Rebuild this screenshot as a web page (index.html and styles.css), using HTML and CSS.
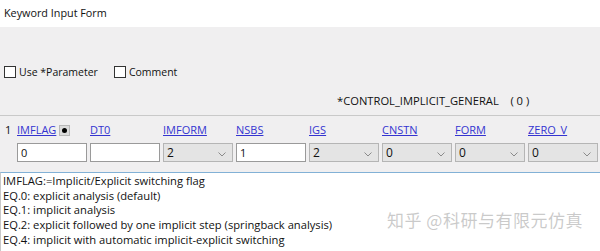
FILE: index.html
```html
<!DOCTYPE html>
<html>
<head>
<meta charset="utf-8">
<link rel="stylesheet" href="styles.css">
</head>
<body>
<div class="win">
  <div class="title">Keyword Input Form</div>
  <div class="panel">
    <div class="options">
      <label class="opt"><span class="box"></span>Use *Parameter</label>
      <label class="opt"><span class="box"></span>Comment</label>
    </div>
    <div class="kw">*CONTROL_IMPLICIT_GENERAL&nbsp;&nbsp;&nbsp;&nbsp;(&nbsp;0&nbsp;)</div>
    <div class="sep"></div>
    <div class="card">
      <div class="num">1</div>
      <div class="fields">
        <div class="field">
          <div class="lab"><a>IMFLAG</a><span class="radio"><span class="dot"></span></span></div>
          <div class="inp">0</div>
        </div>
        <div class="field">
          <div class="lab"><a>DT0</a></div>
          <div class="inp"></div>
        </div>
        <div class="field">
          <div class="lab"><a>IMFORM</a></div>
          <div class="sel">2<svg class="chev" width="8" height="5" viewBox="0 0 8 5"><path d="M0.5 0.5 L4 4 L7.5 0.5" fill="none" stroke="#8a8a8a" stroke-width="1"/></svg></div>
        </div>
        <div class="field">
          <div class="lab"><a>NSBS</a></div>
          <div class="inp">1</div>
        </div>
        <div class="field">
          <div class="lab"><a>IGS</a></div>
          <div class="sel">2<svg class="chev" width="8" height="5" viewBox="0 0 8 5"><path d="M0.5 0.5 L4 4 L7.5 0.5" fill="none" stroke="#8a8a8a" stroke-width="1"/></svg></div>
        </div>
        <div class="field">
          <div class="lab"><a>CNSTN</a></div>
          <div class="sel">0<svg class="chev" width="8" height="5" viewBox="0 0 8 5"><path d="M0.5 0.5 L4 4 L7.5 0.5" fill="none" stroke="#8a8a8a" stroke-width="1"/></svg></div>
        </div>
        <div class="field">
          <div class="lab"><a>FORM</a></div>
          <div class="sel">0<svg class="chev" width="8" height="5" viewBox="0 0 8 5"><path d="M0.5 0.5 L4 4 L7.5 0.5" fill="none" stroke="#8a8a8a" stroke-width="1"/></svg></div>
        </div>
        <div class="field">
          <div class="lab"><a>ZERO_V</a></div>
          <div class="sel">0<svg class="chev" width="8" height="5" viewBox="0 0 8 5"><path d="M0.5 0.5 L4 4 L7.5 0.5" fill="none" stroke="#8a8a8a" stroke-width="1"/></svg></div>
        </div>
      </div>
    </div>
  </div>
  <div class="desc">
    <div>IMFLAG:=Implicit/Explicit switching flag</div>
    <div>EQ.0: explicit analysis (default)</div>
    <div>EQ.1: implicit analysis</div>
    <div>EQ.2: explicit followed by one implicit step (springback analysis)</div>
    <div>EQ.4: implicit with automatic implicit-explicit switching</div>
    <div>EQ.5: implicit with automatic switching and mandatory implicit finish</div>
    <div class="mark">知乎 @科研与有限元仿真</div>
  </div>
</div>
</body>
</html>
```
FILE: styles.css
```css
html, body {
  margin: 0;
  padding: 0;
}
body {
  width: 600px;
  height: 251px;
  overflow: hidden;
  font-family: "Open Sans", "Noto Sans", "Liberation Sans", sans-serif;
  font-size: 11px;
  color: #111;
  background: #fff;
}
.win {
  display: flex;
  flex-direction: column;
  height: 251px;
}
.title {
  height: 27px;
  line-height: 26px;
  padding-left: 4px;
  background: #fff;
  font-size: 10.8px;
}
.panel {
  background: #f0eff0;
  height: 145px;
  display: flex;
  flex-direction: column;
}
.options {
  display: flex;
  gap: 16px;
  padding: 38px 0 0 4px;
  height: 14px;
  font-size: 10.5px;
}
.opt {
  display: flex;
  align-items: center;
  gap: 3px;
  line-height: 14px;
}
.box {
  width: 10px;
  height: 10px;
  border: 1px solid #333;
  background: #fff;
}
.kw {
  margin-top: 14px;
  padding-left: 337px;
  line-height: 16px;
  height: 16px;
  font-size: 11.2px;
}
.sep {
  margin-top: 6px;
  height: 1px;
  background: #c9c9c9;
}
.card {
  display: flex;
  padding-top: 6px;
}
.num {
  width: 17px;
  padding-left: 5px;
  box-sizing: border-box;
  line-height: 16px;
}
.fields {
  display: flex;
  gap: 3px;
}
.field {
  width: 70px;
  display: flex;
  flex-direction: column;
}
.lab {
  height: 16px;
  line-height: 16px;
  display: flex;
  align-items: center;
  gap: 3px;
}
.lab a {
  color: #3434d0;
  text-decoration: underline;
}
.radio {
  width: 9px;
  height: 9px;
  border: 1px solid #b8b8b8;
  background: #dcdcdc;
  display: flex;
  align-items: center;
  justify-content: center;
}
.dot {
  width: 5px;
  height: 5px;
  border-radius: 50%;
  background: #000;
}
.inp, .sel {
  margin-top: 5px;
  height: 19px;
  box-sizing: border-box;
  border: 1px solid #9a9a9a;
  background: #fff;
  padding-left: 3px;
  line-height: 17px;
  font-size: 11px;
  position: relative;
}
.sel {
  background: #e4e4e4;
  border-color: #b5b5b5;
  font-size: 12px;
}
.chev {
  position: absolute;
  right: 6px;
  top: 8px;
}
.desc {
  flex: 1;
  background: #fff;
  border-top: 1px solid #82b1d6;
  border-left: 1px solid #c8c8c8;
  padding: 1px 0 0 2px;
  line-height: 14.7px;
  font-size: 11.2px;
  position: relative;
  overflow: hidden;
  white-space: nowrap;
}
.mark {
  position: absolute;
  left: 386px;
  top: 36px;
  font-family: "Noto Sans CJK SC", sans-serif;
  font-size: 17px;
  line-height: 22px;
  color: rgba(150, 150, 150, 0.5);
  letter-spacing: 0.5px;
}
```
